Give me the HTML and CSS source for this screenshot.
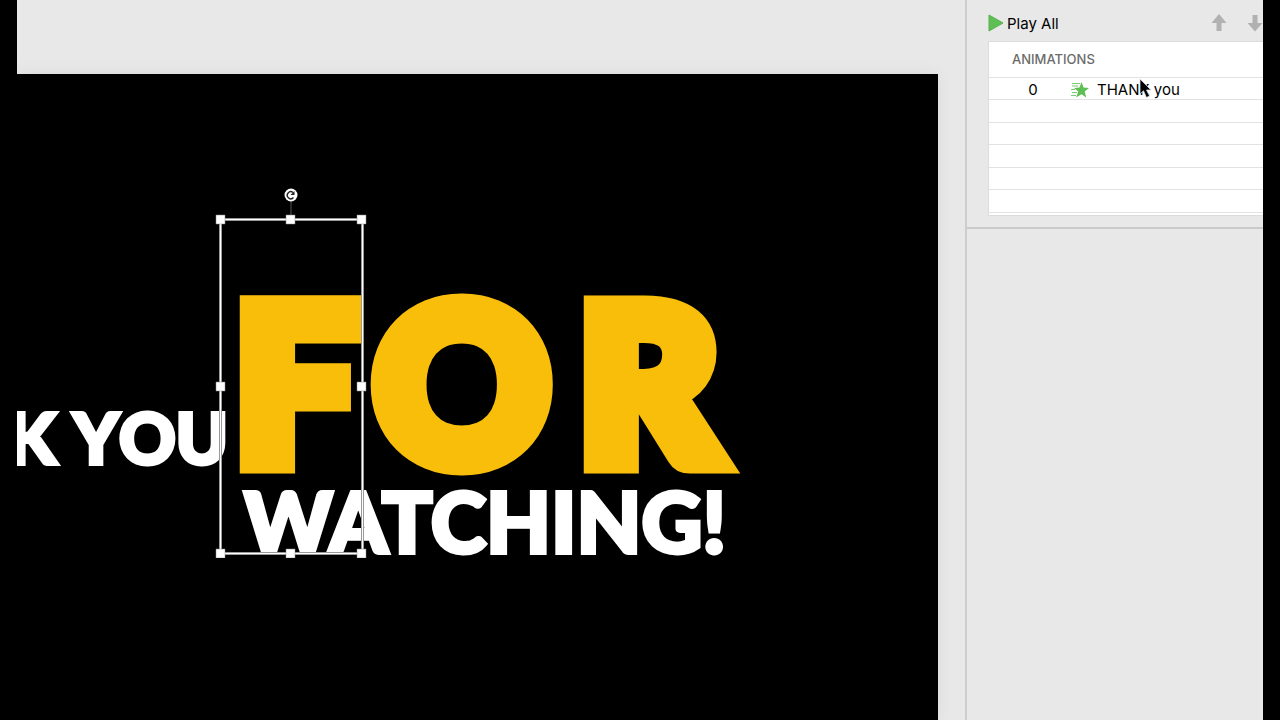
FILE: index.html
```
<!DOCTYPE html>
<html lang="en">
<head>
  <meta charset="UTF-8" />
  <meta name="viewport" content="width=device-width, initial-scale=1.0" />
  <title>Animations</title>
  <link rel="stylesheet" href="styles.css">
</head>
<body>
  <main class="editor">
    <div class="slide">
      <div class="text thank">K YOU</div>
      <div class="text letter letter-f">F</div>
      <div class="text letter letter-o">O</div>
      <div class="text letter letter-r">R</div>
      <div class="text watching">WATCHING!</div>
      <svg class="selection" width="152" height="372" viewBox="0 0 152 372" aria-hidden="true">
        <path d="M76 14v18" stroke="#555" />
        <path d="M5.500 33.500h142v334h-142z" fill="none" stroke="#777" stroke-width="3" />
        <path d="M5.500 33.500h142v334h-142z" fill="none" stroke="#fff" stroke-width="1.500" />
        <g fill="#fff" stroke="#888" stroke-width=".5">
          <path d="M1 29h9v9h-9zM71 29h9v9h-9zM142 29h9v9h-9z" />
          <path d="M1 196h9v9h-9zM142 196h9v9h-9z" />
          <path d="M1 363h9v9h-9zM71 363h9v9h-9zM142 363h9v9h-9z" />
        </g>
        <circle cx="76" cy="9" r="6.500" fill="#fff" />
        <path d="M78.500 11.500A3.500 3.500 0 1 1 78 6.500" fill="none" stroke="#222" stroke-width="1.400" />
        <path d="M79.500 5v4h-4z" fill="#222" />
      </svg>
    </div>
  </main>
  <aside class="pane">
    <section class="panel">
      <div class="toolbar">
        <button class="play" type="button">
          <svg width="16" height="18" viewBox="0 0 16 18" aria-hidden="true"><path d="M1 1L15 9L1 17z" fill="#5fbf55" stroke="#55b34c" stroke-linejoin="round" /></svg>
          Play All
        </button>
        <button class="move" type="button" aria-label="Move up">
          <svg width="16" height="18" viewBox="0 0 16 18"><path d="M8 0L15.500 9H10.500V17H5.500V9H.500z" fill="#b1b1b1" /></svg>
        </button>
        <button class="move" type="button" aria-label="Move down">
          <svg width="16" height="18" viewBox="0 0 16 18"><path d="M8 17.500L15.500 9H10.500V1H5.500V9H.500z" fill="#b1b1b1" /></svg>
        </button>
      </div>
      <table class="list">
        <thead>
          <tr><th colspan="3">ANIMATIONS</th></tr>
        </thead>
        <tbody>
          <tr>
            <td class="order">0</td>
            <td class="effect">
              <svg width="18" height="16" viewBox="0 0 18 16" aria-hidden="true">
                <path d="M10.500 0L12.500 5.500L18 6L13.700 9.600L15.200 15.500L10.500 12.300L5.200 15.500L7.200 9.600L3 6L8.500 5.500z" fill="#5fbf55" />
                <path d="M1 1.500h8M1 4h6M0 7.500h4M1 10.500h5M0 13.500h5" stroke="#7ecb76" stroke-width="1.200" />
              </svg>
            </td>
            <td class="name">THANK you</td>
          </tr>
          <tr><td colspan="3"></td></tr>
          <tr><td colspan="3"></td></tr>
          <tr><td colspan="3"></td></tr>
          <tr><td colspan="3"></td></tr>
          <tr><td colspan="3"></td></tr>
        </tbody>
      </table>
    </section>
    <svg class="cursor" width="14" height="22" viewBox="0 0 14 22" aria-hidden="true">
      <path d="M1 1V16L4.500 12.800L7.500 19.500L10.500 18L7.500 12H12z" fill="#000" stroke="#ddd" stroke-width=".8" />
    </svg>
  </aside>
</body>
</html>
```

FILE: styles.css
```
* {
  box-sizing: border-box;
}
body {
  margin: 0;
  padding: 0 17px;
  height: 100vh;
  display: flex;
  overflow: hidden;
  background: #000;
  color: #000;
  font-family: Inter, sans-serif;
  font-size: 15px;
}
.editor {
  flex: 1;
  display: flex;
  min-width: 0;
  padding: 74px 27px 0 0;
  background: #e8e8e8;
  overflow: hidden;
}
.slide {
  position: relative;
  flex: 1;
  background: #000;
  box-shadow: 0 0 16px rgba(0, 0, 0, 0.06);
}

/* Text boxes on the slide */
.text {
  position: absolute;
  color: #fff;
  font-family: Lato, sans-serif;
  font-weight: 900;
  line-height: 1;
  white-space: nowrap;
}
.letter {
  top: 199px;
  color: #f9be0a;
  font-size: 214px;
  -webkit-text-stroke: 23px #f9be0a;
}
.letter-f {
  left: 218px;
}
.letter-o {
  left: 358px;
}
.letter-r {
  left: 562px;
}
.thank {
  top: 328px;
  right: 710px;
  font-size: 70px;
  font-kerning: none;
  -webkit-text-stroke: 4px #fff;
}
.watching {
  top: 405px;
  left: 227px;
  font-size: 84px;
  -webkit-text-stroke: 4px #fff;
}
.selection {
  position: absolute;
  top: 112px;
  left: 198px;
}

/* Animation pane */
.pane {
  position: relative;
  flex: none;
  width: 298px;
  border-left: 2px solid #cdcdcd;
  background: #e8e8e8;
  overflow: hidden;
}
.panel {
  padding: 10px 0 11px 21px;
  border-bottom: 2px solid #cacaca;
}
.toolbar {
  display: flex;
  align-items: center;
  height: 26px;
  gap: 20px;
  margin-bottom: 5px;
}
button {
  display: flex;
  align-items: center;
  flex: none;
  padding: 0;
  border: none;
  background: none;
  color: inherit;
  font: inherit;
}
.play {
  gap: 3px;
  margin-right: auto;
}
.list {
  width: 100%;
  border: 1px solid #dcdcdc;
  border-right: none;
  border-collapse: separate;
  border-spacing: 0;
  background: #fff;
  padding-bottom: 2px;
}
th,
td {
  height: 22px;
  padding: 2px 0 0;
  border-bottom: 1px solid #e2e2e2;
  line-height: 19px;
}
tr:nth-child(even) td {
  height: 23px;
}
thead th {
  height: 36px;
  padding: 0 0 0 23px;
  color: #6b6b6b;
  font-size: 13px;
  font-weight: 500;
  text-align: left;
}
.order {
  width: 82px;
  padding-left: 6px;
  text-align: center;
}
.effect {
  width: 26px;
}
.effect svg {
  display: block;
}
.cursor {
  position: absolute;
  top: 78px;
  left: 172px;
}
```
